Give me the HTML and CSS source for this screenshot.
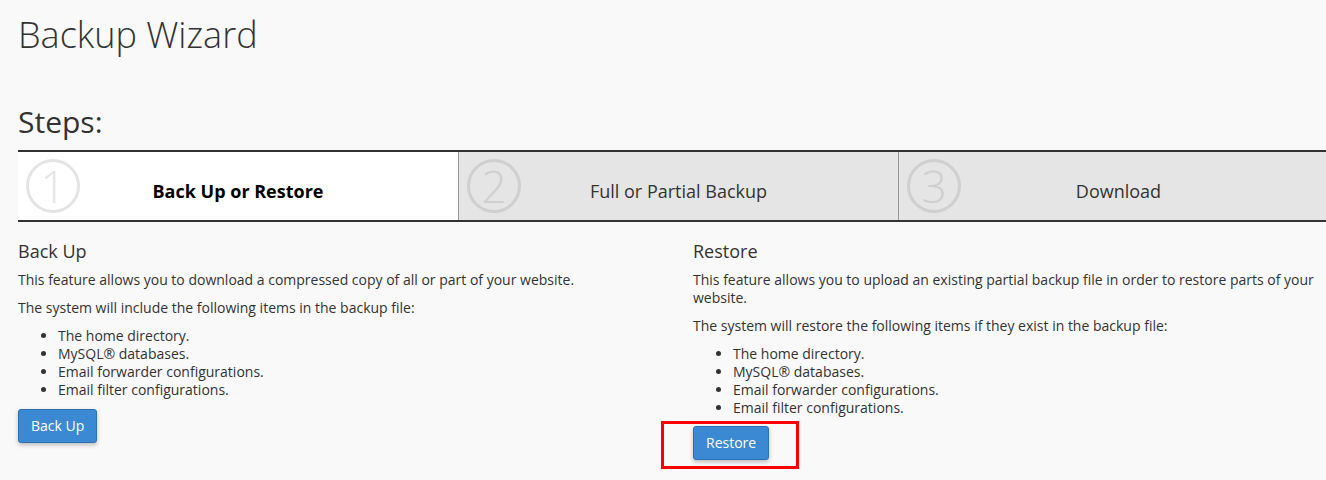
FILE: index.html
```html
<!DOCTYPE html>
<html lang="en">
<head>
<meta charset="utf-8">
<title>Backup Wizard</title>
<link rel="stylesheet" href="styles.css">
</head>
<body>
<h1 class="page-title">Backup Wizard</h1>
<h2 class="steps-title">Steps:</h2>
<div class="steps-viewport">
  <div class="steps">
    <div class="step step-active">
      <span class="step-num">1</span>
      <span class="step-label">Back Up or Restore</span>
    </div>
    <div class="step">
      <span class="step-num">2</span>
      <span class="step-label">Full or Partial Backup</span>
    </div>
    <div class="step">
      <span class="step-num">3</span>
      <span class="step-label">Download</span>
    </div>
  </div>
</div>
<div class="columns">
  <section class="col">
    <h3 class="col-title">Back Up</h3>
    <p>This feature allows you to download a compressed copy of all or part of your website.</p>
    <p>The system will include the following items in the backup file:</p>
    <ul>
      <li>The home directory.</li>
      <li>MySQL® databases.</li>
      <li>Email forwarder configurations.</li>
      <li>Email filter configurations.</li>
    </ul>
    <button class="btn">Back Up</button>
  </section>
  <section class="col">
    <h3 class="col-title">Restore</h3>
    <p>This feature allows you to upload an existing partial backup file in order to restore parts of your website.</p>
    <p>The system will restore the following items if they exist in the backup file:</p>
    <ul>
      <li>The home directory.</li>
      <li>MySQL® databases.</li>
      <li>Email forwarder configurations.</li>
      <li>Email filter configurations.</li>
    </ul>
    <div class="btn-wrap">
      <button class="btn">Restore</button>
      <span class="highlight"></span>
    </div>
  </section>
</div>
</body>
</html>
```
FILE: styles.css
```css
body {
  margin: 0;
  padding: 15px 0 30px 18px;
  background: #f9f9f9;
  color: #333;
  font-family: "Open Sans", "Liberation Sans", sans-serif;
  font-size: 14px;
  line-height: 18px;
}
.page-title {
  margin: 0;
  font-size: 36px;
  line-height: 40px;
  font-weight: 300;
  color: #333;
}
.steps-title {
  margin: 50px 0 11px;
  font-size: 30px;
  line-height: 34px;
  font-weight: 400;
  color: #333;
}
.steps-viewport {
  overflow: hidden;
}
.steps {
  display: flex;
  width: 1340px;
  border-top: 2px solid #333;
  border-bottom: 2px solid #333;
}
.step {
  box-sizing: border-box;
  flex: 0 0 440px;
  height: 68px;
  display: grid;
  grid-template-columns: 62px 1fr 62px;
  align-items: center;
  background: #e5e5e5;
  border-left: 1px solid #999;
  color: #333;
}
.step-active {
  background: #fff;
  border-left: none;
}
.step-num {
  box-sizing: border-box;
  margin-left: 8px;
  width: 54px;
  height: 54px;
  border: 3px solid #cfcfcf;
  border-radius: 50%;
  display: flex;
  align-items: center;
  justify-content: center;
  font-size: 44px;
  line-height: 48px;
  font-weight: 300;
  color: #cfcfcf;
}
.step-active .step-num {
  border-color: #e4e4e4;
  color: #e4e4e4;
}
.step-label {
  text-align: center;
  font-size: 18px;
  line-height: 24px;
  padding-top: 9px;
}
.step-active .step-label {
  font-weight: 700;
  color: #000;
}
.columns {
  display: grid;
  grid-template-columns: 675px 633px;
  margin-top: 19px;
}
.col-title {
  margin: 0 0 10px;
  font-size: 18px;
  line-height: 20px;
  font-weight: 400;
}
.col p {
  margin: 0 0 10px;
}
.col ul {
  margin: 0 0 10px;
  padding-left: 40px;
}
.btn {
  box-sizing: border-box;
  height: 34px;
  padding: 6px 12px;
  font-family: inherit;
  font-size: 14px;
  line-height: 20px;
  color: #fff;
  background: #3b88d3;
  border: 1px solid #2f70b3;
  border-radius: 3px;
  box-shadow: 0 2px 4px rgba(0, 0, 0, 0.25);
}
.btn-wrap {
  position: relative;
  display: inline-block;
  margin-top: -1px;
}
.highlight {
  position: absolute;
  left: -32px;
  top: -5px;
  width: 138px;
  height: 48px;
  box-sizing: border-box;
  border: 3px solid #f00;
}
```
